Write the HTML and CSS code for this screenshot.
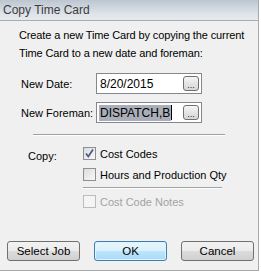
FILE: index.html
```html
<!DOCTYPE html>
<html>
<head>
	<title>Copy Time Card</title>
	<meta charset="utf-8">
	<link rel="stylesheet" href="styles.css">
</head>
<body>
	<div class="window">
		<div class="titlebar">Copy Time Card</div>

		<div class="content">
			<p class="intro">Create a new Time Card by copying the current<br>Time Card to a new date and foreman:</p>

			<div class="fields">
				<label class="label">New Date:</label>
				<div class="field">
					<span class="value">8/20/2015</span>
					<button class="dots">...</button>
				</div>

				<label class="label">New Foreman:</label>
				<div class="field">
					<span class="value selected">DISPATCH,B</span><span class="caret"></span>
					<button class="dots">...</button>
				</div>
			</div>

			<hr class="sep wide">

			<div class="copy">
				<span class="copy-label">Copy:</span>
				<div class="checks">
					<div class="check">
						<span class="box">
							<svg width="11" height="11" viewBox="0 0 11 11"><path d="M2 5.5 L4.3 8.5 L9 1.5" fill="none" stroke="#4b5d8f" stroke-width="1.8"/></svg>
						</span>
						<span>Cost Codes</span>
					</div>
					<div class="check">
						<span class="box"></span>
						<span>Hours and Production Qty</span>
					</div>
					<hr class="sep short">
					<div class="check disabled">
						<span class="box"></span>
						<span>Cost Code Notes</span>
					</div>
				</div>
			</div>

			<div class="buttons">
				<button class="btn">Select Job</button>
				<button class="btn default">OK</button>
				<button class="btn">Cancel</button>
			</div>
		</div>
	</div>
</body>
</html>
```

FILE: styles.css
```css
* {
	margin: 0;
	padding: 0;
	box-sizing: border-box;
}

body {
	width: 261px;
	height: 272px;
	background: #fff;
	font-family: "Liberation Sans", Arial, sans-serif;
	font-size: 11px;
	color: #000;
}

.window {
	width: 259px;
	height: 271px;
	background: #f0f0f0;
	border-right: 1px solid #a9a9a9;
	border-bottom: 1px solid #a9a9a9;
}

.titlebar {
	height: 21px;
	padding-left: 3px;
	line-height: 20px;
	font-size: 12px;
	color: #3c3c3c;
	background: linear-gradient(#bcc5d1, #dfe4ea 70%, #e7eaee);
	border-bottom: 1px solid #a5adbb;
}

.content {
	padding: 5px 0 0 19px;
}

.intro {
	line-height: 18px;
	letter-spacing: -0.12px;
}

.fields {
	display: grid;
	grid-template-columns: 77px 106px;
	row-gap: 8px;
	align-items: center;
	margin-top: 11px;
}

.label {
	padding-left: 2px;
}

.field {
	height: 21px;
	border: 1px solid #828790;
	background: #fff;
	display: flex;
	align-items: center;
	padding-left: 2px;
	position: relative;
}

.value {
	line-height: 16px;
	font-size: 12px;
	padding: 0 1px;
}

.selected {
	background: #aaaeb8;
}

.caret {
	width: 1px;
	height: 15px;
	background: #000;
}

.dots {
	position: absolute;
	right: 2px;
	top: 2px;
	width: 16px;
	height: 15px;
	border: 1px solid #707070;
	border-radius: 3px;
	background: linear-gradient(#f6f6f6, #e4e4e4 50%, #d6d6d6);
	font: 9px "Liberation Sans", sans-serif;
	line-height: 17px;
	color: #222;
}

.sep {
	border: 0;
	border-top: 1px solid #a0a0a0;
	border-bottom: 1px solid #fff;
}

.wide {
	margin: 11px 0 0 14px;
	width: 192px;
}

.copy {
	display: flex;
	margin-top: 11px;
}

.copy-label {
	width: 64px;
	padding: 3px 0 0 9px;
}

.checks {
	display: flex;
	flex-direction: column;
	gap: 8px;
}

.check {
	display: flex;
	align-items: center;
	gap: 4px;
	height: 13px;
}

.box {
	width: 13px;
	height: 13px;
	border: 1px solid #8f8f8f;
	background: linear-gradient(135deg, #dcdcdc, #f8f8f8);
	display: flex;
	align-items: center;
	justify-content: center;
}

.disabled {
	color: #a3a3a3;
}

.disabled .box {
	border-color: #bcbcbc;
	background: #f4f4f4;
}

.short {
	width: 139px;
	margin: -2px 0 -2px;
}

.buttons {
	display: flex;
	gap: 14px;
	margin: 33px 0 0 -12px;
}

.btn {
	width: 73px;
	height: 20px;
	border: 1px solid #707070;
	border-radius: 3px;
	background: linear-gradient(#f2f2f2, #ebebeb 50%, #dddddd 50%, #cfcfcf);
	font: 11.5px "Liberation Sans", Arial, sans-serif;
	color: #000;
}

.btn.default {
	border-color: #3c7fb1;
	background: linear-gradient(#eaf6fd, #d9f0fc 50%, #bee6fd 50%, #a7d9f5);
	box-shadow: inset 0 0 0 1px #ddf3fd;
}
```
